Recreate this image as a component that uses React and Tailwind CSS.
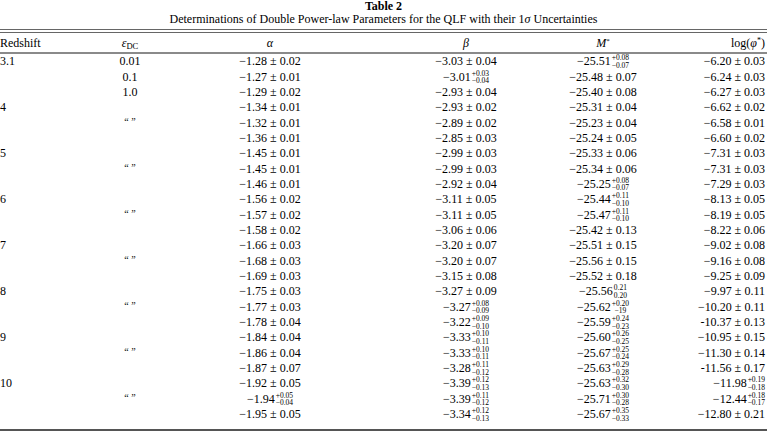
import React from 'react';

// each row: [redshift, eps, alpha, beta, mstar, logphi]
// a value with "|" is "value|sup|sub"
const rows = [
  ['3.1', '0.01', '−1.28 ± 0.02', '−3.03 ± 0.04', '−25.51|+0.08|−0.07', '−6.20 ± 0.03'],
  ['', '0.1', '−1.27 ± 0.01', '−3.01|+0.03|−0.04', '−25.48 ± 0.07', '−6.24 ± 0.03'],
  ['', '1.0', '−1.29 ± 0.02', '−2.93 ± 0.04', '−25.40 ± 0.08', '−6.27 ± 0.03'],
  ['4', '', '−1.34 ± 0.01', '−2.93 ± 0.02', '−25.31 ± 0.04', '−6.62 ± 0.02'],
  ['', 'ditto', '−1.32 ± 0.01', '−2.89 ± 0.02', '−25.23 ± 0.04', '−6.58 ± 0.01'],
  ['', '', '−1.36 ± 0.01', '−2.85 ± 0.03', '−25.24 ± 0.05', '−6.60 ± 0.02'],
  ['5', '', '−1.45 ± 0.01', '−2.99 ± 0.03', '−25.33 ± 0.06', '−7.31 ± 0.03'],
  ['', 'ditto', '−1.45 ± 0.01', '−2.99 ± 0.03', '−25.34 ± 0.06', '−7.31 ± 0.03'],
  ['', '', '−1.46 ± 0.01', '−2.92 ± 0.04', '−25.25|+0.08|−0.07', '−7.29 ± 0.03'],
  ['6', '', '−1.56 ± 0.02', '−3.11 ± 0.05', '−25.44|+0.11|−0.10', '−8.13 ± 0.05'],
  ['', 'ditto', '−1.57 ± 0.02', '−3.11 ± 0.05', '−25.47|+0.11|−0.10', '−8.19 ± 0.05'],
  ['', '', '−1.58 ± 0.02', '−3.06 ± 0.06', '−25.42 ± 0.13', '−8.22 ± 0.06'],
  ['7', '', '−1.66 ± 0.03', '−3.20 ± 0.07', '−25.51 ± 0.15', '−9.02 ± 0.08'],
  ['', 'ditto', '−1.68 ± 0.03', '−3.20 ± 0.07', '−25.56 ± 0.15', '−9.16 ± 0.08'],
  ['', '', '−1.69 ± 0.03', '−3.15 ± 0.08', '−25.52 ± 0.18', '−9.25 ± 0.09'],
  ['8', '', '−1.75 ± 0.03', '−3.27 ± 0.09', '−25.56|0.21|0.20', '−9.97 ± 0.11'],
  ['', 'ditto', '−1.77 ± 0.03', '−3.27|+0.08|−0.09', '−25.62|+0.20|−19', '−10.20 ± 0.11'],
  ['', '', '−1.78 ± 0.04', '−3.22|+0.09|−0.10', '−25.59|+0.24|−0.23', '-10.37 ± 0.13'],
  ['9', '', '−1.84 ± 0.04', '−3.33|+0.10|−0.11', '−25.60|+0.26|−0.25', '−10.95 ± 0.15'],
  ['', 'ditto', '−1.86 ± 0.04', '−3.33|+0.10|−0.11', '−25.67|+0.25|−0.24', '−11.30 ± 0.14'],
  ['', '', '−1.87 ± 0.07', '−3.28|+0.11|−0.12', '−25.63|+0.29|−0.28', '-11.56 ± 0.17'],
  ['10', '', '−1.92 ± 0.05', '−3.39|+0.12|−0.13', '−25.63|+0.32|−0.30', '−11.98|+0.19|−0.18'],
  ['', 'ditto', '−1.94|+0.05|−0.04', '−3.39|+0.11|−0.12', '−25.71|+0.30|−0.28', '−12.44|+0.18|−0.17'],
  ['', '', '−1.95 ± 0.05', '−3.34|+0.12|−0.13', '−25.67|+0.35|−0.33', '−12.80 ± 0.21'],
];

const cols = 'grid grid-cols-[90px_80px_200px_192px_82px_123px]';

function Val({ text }) {
  if (!text.includes('|')) return <span className="whitespace-pre">{text}</span>;
  const [v, up, dn] = text.split('|');
  return (
    <span className="inline-flex items-center whitespace-pre">
      {v}
      <span className="inline-flex flex-col text-[7.5px] leading-[7.5px] ml-[1px]">
        <span>{up}</span>
        <span>{dn}</span>
      </span>
    </span>
  );
}

export default function App() {
  return (
    <div
      className="w-[767px] h-[434px] bg-white text-black text-[12px] overflow-hidden"
      style={{ fontFamily: '"Liberation Serif", "DejaVu Serif", serif' }}
    >
      <div className="text-center font-bold leading-[13px]">Table 2</div>
      <div className="text-center leading-[12px]">
        Determinations of Double Power-law Parameters for the QLF with their 1<i>σ</i> Uncertainties
      </div>

      {/* double rule */}
      <div className="mt-[4px] border-t border-[#666]"></div>
      <div className="mt-[2px] border-t border-[#666]"></div>

      {/* header */}
      <div className={`${cols} h-[19px] items-center`}>
        <div>Redshift</div>
        <div className="text-center">
          <i>ε</i>
          <span className="text-[8.5px] relative top-[2px]">DC</span>
        </div>
        <div className="text-center"><i>α</i></div>
        <div className="text-center"><i>β</i></div>
        <div className="text-center">
          <i>M</i>
          <sup className="text-[7px]">*</sup>
        </div>
        <div className="text-right pr-[2px]">
          log(<i>φ</i>
          <sup className="text-[8px]">*</sup>)
        </div>
      </div>
      <div className="border-t-2 border-[#8a8a8a]"></div>

      {/* body */}
      <div className="flex flex-col">
        {rows.map((r, i) => (
          <div key={i} className={`${cols} h-[15.35px] items-center leading-[15px]`}>
            <div>{r[0]}</div>
            <div className="text-center">
              {r[1] === 'ditto' ? (
                <span className="text-[10px] relative -top-[2px] whitespace-pre">“ ”</span>
              ) : (
                r[1]
              )}
            </div>
            <div className="text-center"><Val text={r[2]} /></div>
            <div className="text-center"><Val text={r[3]} /></div>
            <div className="text-center"><Val text={r[4]} /></div>
            <div className="text-right pr-[2px]"><Val text={r[5]} /></div>
          </div>
        ))}
      </div>

      <div className="mt-[7px] border-t-2 border-[#555]"></div>
    </div>
  );
}
